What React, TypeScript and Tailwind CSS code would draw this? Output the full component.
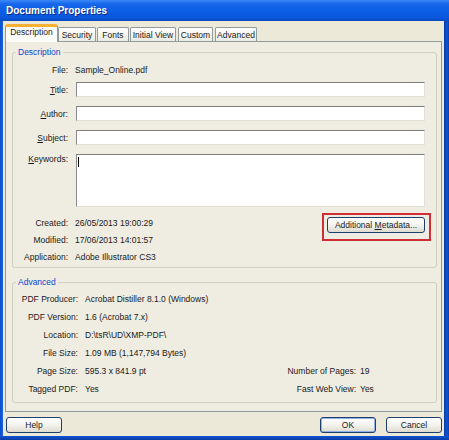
import React from "react";

function U({ c }: { c: string }) {
  return <span className="underline underline-offset-[1px]">{c}</span>;
}

function Tab({ label, w, ml, selected }: { label: string; w: string; ml?: string; selected?: boolean }) {
  if (selected) {
    return (
      <div
        className={`${w} h-[18px] -mb-[1px] relative z-10 flex justify-center border-t-[3px] border-t-[#f5b133] border-x border-x-[#919b9c] rounded-t-[3px] bg-[#fbfbf8]`}
      >
        <span>{label}</span>
      </div>
    );
  }
  return (
    <div
      className={`${w} ${ml ?? ""} h-[14px] flex justify-center pt-[2px] border-t border-x border-[#919b9c] rounded-t-[2px] bg-gradient-to-b from-[#ffffff] to-[#ebeae4]`}
    >
      <span>{label}</span>
    </div>
  );
}

function Input({ h }: { h: string }) {
  return (
    <div
      className={`ml-[8px] flex-1 ${h} bg-white border-t border-l border-t-[#7d7d7d] border-l-[#8a8a8a] border-r border-b border-r-[#e2dfd4] border-b-[#e2dfd4]`}
    />
  );
}

function XpButton({ children, w, def, className }: { children: React.ReactNode; w: string; def?: boolean; className?: string }) {
  return (
    <div
      className={`${w} h-[16px] flex items-center justify-center border border-[#1c3f6e] rounded-[3px] bg-gradient-to-b from-[#ffffff] via-[#f4f3ee] to-[#dedcd0] ${
        def ? "shadow-[inset_0_0_0_1px_#8fb0e8]" : ""
      } ${className ?? ""}`}
    >
      {children}
    </div>
  );
}

export default function App() {
  return (
    <div className="w-[449px] h-[440px] flex flex-col bg-[#0a4fd2] font-['Liberation_Sans',Arial,sans-serif] text-[8.5px] leading-[10px] text-[#1a1a1a]">
      {/* Title bar */}
      <div className="h-[21px] shrink-0 flex items-center pl-[6px] bg-[linear-gradient(to_bottom,#3d8af7_0%,#1667ec_18%,#0b5de4_55%,#0a57da_85%,#0a49c0_100%)]">
        <span className="text-white font-bold text-[10px] leading-[12px] [text-shadow:1px_1px_0_#0a2b86]">
          Document Properties
        </span>
      </div>

      <div className="flex flex-1 min-h-0">
        <div className="w-[3px] bg-[linear-gradient(to_right,#0a4cc8,#1c64e4)]" />

        {/* Body */}
        <div className="flex-1 bg-[#ece9d8] flex flex-col pt-[3px]">
          {/* Tabs */}
          <div className="h-[17px] flex items-end pl-[2px]">
            <Tab label="Description" w="w-[53px]" selected />
            <Tab label="Security" w="w-[38px]" />
            <Tab label="Fonts" w="w-[32px]" ml="ml-[1px]" />
            <Tab label="Initial View" w="w-[46px]" ml="ml-[1px]" />
            <Tab label="Custom" w="w-[35px]" ml="ml-[2px]" />
            <Tab label="Advanced" w="w-[42px]" ml="ml-[2px]" />
          </div>

          {/* Panel */}
          <div className="ml-[2px] w-[437px] h-[371px] border border-[#919b9c] bg-[#efece1] pt-[5px] flex flex-col">
            {/* Description group */}
            <fieldset className="ml-[6px] mr-[4px] border border-[#d3d0bf] rounded-[3px] px-0 pb-[2px]">
              <legend className="ml-[3px] px-[2px] text-[#0b46cf] leading-[10px]">Description</legend>

              <div className="mt-[6px] h-[14px] flex items-center">
                <span className="w-[55px] text-right">File:</span>
                <span className="ml-[7px]">Sample_Online.pdf</span>
              </div>

              <div className="mt-[5px] flex items-center pr-[11px]">
                <span className="w-[55px] text-right">
                  <U c="T" />
                  itle:
                </span>
                <Input h="h-[15px]" />
              </div>

              <div className="mt-[9px] flex items-center pr-[11px]">
                <span className="w-[55px] text-right">
                  <U c="A" />
                  uthor:
                </span>
                <Input h="h-[15px]" />
              </div>

              <div className="mt-[9px] flex items-center pr-[11px]">
                <span className="w-[55px] text-right">
                  <U c="S" />
                  ubject:
                </span>
                <Input h="h-[15px]" />
              </div>

              <div className="mt-[9px] flex items-start pr-[11px]">
                <span className="w-[55px] text-right">
                  <U c="K" />
                  eywords:
                </span>
                <div className="ml-[8px] flex-1 h-[53px] bg-white border-t border-l border-t-[#7d7d7d] border-l-[#8a8a8a] border-r border-b border-r-[#e2dfd4] border-b-[#e2dfd4] pl-[1px] pt-[2px]">
                  <div className="w-[1px] h-[10px] bg-black" />
                </div>
              </div>

              <div className="mt-[6px] flex pr-[5px]">
                <div className="flex-1 pt-[1px] flex flex-col">
                  <div className="h-[17px] flex items-center">
                    <span className="w-[55px] text-right">Created:</span>
                    <span className="ml-[7px]">26/05/2013 19:00:29</span>
                  </div>
                  <div className="h-[17px] flex items-center">
                    <span className="w-[55px] text-right">Modified:</span>
                    <span className="ml-[7px]">17/06/2013 14:01:57</span>
                  </div>
                  <div className="h-[17px] flex items-center">
                    <span className="w-[55px] text-right">Application:</span>
                    <span className="ml-[7px]">Adobe Illustrator CS3</span>
                  </div>
                </div>
                <div className="self-start border-2 border-[#cf2f34] pt-[2px] pl-[3px] pr-[4px] pb-[6px]">
                  <XpButton w="w-[98px]">
                    <span>
                      Additional <U c="M" />
                      etadata...
                    </span>
                  </XpButton>
                </div>
              </div>
            </fieldset>

            {/* Advanced group */}
            <fieldset className="mt-[9px] ml-[6px] mr-[4px] border border-[#d3d0bf] rounded-[3px] px-0 pt-[3px] pb-[4px]">
              <legend className="ml-[3px] px-[2px] text-[#0b46cf] leading-[10px]">Advanced</legend>
              {[
                ["PDF Producer:", "Acrobat Distiller 8.1.0 (Windows)"],
                ["PDF Version:", "1.6 (Acrobat 7.x)"],
                ["Location:", "D:\\tsR\\UD\\XMP-PDF\\"],
                ["File Size:", "1.09 MB (1,147,794 Bytes)"],
              ].map(([l, v]) => (
                <div key={l} className="h-[18px] flex items-center">
                  <span className="w-[65px] text-right">{l}</span>
                  <span className="ml-[7px]">{v}</span>
                </div>
              ))}
              <div className="h-[18px] flex items-center">
                <div className="flex-1 flex items-center">
                  <span className="w-[65px] text-right">Page Size:</span>
                  <span className="ml-[7px]">595.3 x 841.9 pt</span>
                </div>
                <div className="w-[166px] flex items-center">
                  <span className="w-[86px] text-right">Number of Pages:</span>
                  <span className="ml-[4px]">19</span>
                </div>
              </div>
              <div className="h-[18px] flex items-center">
                <div className="flex-1 flex items-center">
                  <span className="w-[65px] text-right">Tagged PDF:</span>
                  <span className="ml-[7px]">Yes</span>
                </div>
                <div className="w-[166px] flex items-center">
                  <span className="w-[86px] text-right">Fast Web View:</span>
                  <span className="ml-[4px]">Yes</span>
                </div>
              </div>
            </fieldset>
          </div>

          {/* Buttons */}
          <div className="mt-[5px] h-[16px] flex">
            <XpButton w="w-[56px]" className="ml-[3px]">
              Help
            </XpButton>
            <div className="flex-1" />
            <XpButton w="w-[56px]" def>
              OK
            </XpButton>
            <XpButton w="w-[56px]" className="ml-[10px] mr-[2px]">
              Cancel
            </XpButton>
          </div>
        </div>

        <div className="w-[5px] bg-[linear-gradient(to_right,#0a3ca4,#0f54d2_60%,#0a3fb2)]" />
      </div>
      <div className="h-[4px] shrink-0 bg-[linear-gradient(to_bottom,#0f54d2,#0a3ca4)]" />
    </div>
  );
}
